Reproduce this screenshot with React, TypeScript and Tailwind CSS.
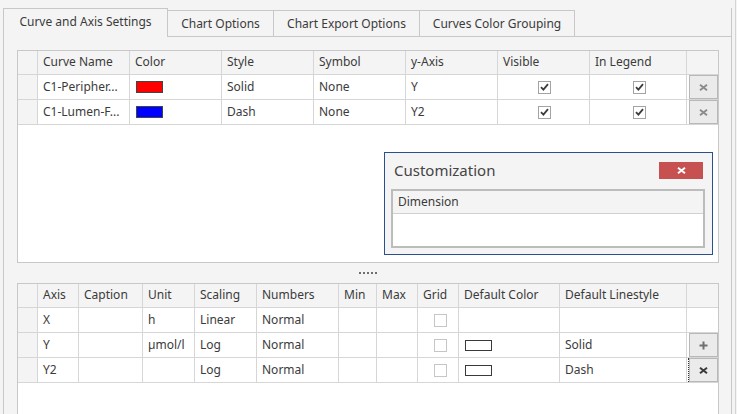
import React from 'react';

type Col = { w: string; label: string };

const curveCols: Col[] = [
  { w: 'w-[20px]', label: '' },
  { w: 'w-[92px]', label: 'Curve Name' },
  { w: 'w-[92px]', label: 'Color' },
  { w: 'w-[92px]', label: 'Style' },
  { w: 'w-[92px]', label: 'Symbol' },
  { w: 'w-[92px]', label: 'y-Axis' },
  { w: 'w-[92px]', label: 'Visible' },
  { w: 'w-[97px]', label: 'In Legend' },
];

const axisCols: Col[] = [
  { w: 'w-[20px]', label: '' },
  { w: 'w-[41px]', label: 'Axis' },
  { w: 'w-[64px]', label: 'Caption' },
  { w: 'w-[52px]', label: 'Unit' },
  { w: 'w-[62px]', label: 'Scaling' },
  { w: 'w-[82px]', label: 'Numbers' },
  { w: 'w-[38px]', label: 'Min' },
  { w: 'w-[41px]', label: 'Max' },
  { w: 'w-[41px]', label: 'Grid' },
  { w: 'w-[101px]', label: 'Default Color' },
  { w: 'w-[127px]', label: 'Default Linestyle' },
];

const curves = [
  { name: 'C1-Peripher...', color: 'bg-[#ff0000]', style: 'Solid', symbol: 'None', axis: 'Y' },
  { name: 'C1-Lumen-F...', color: 'bg-[#0000ff]', style: 'Dash', symbol: 'None', axis: 'Y2' },
];

const axes = [
  { axis: 'X', unit: 'h', scaling: 'Linear', numbers: 'Normal', swatch: false, line: '', btn: 'none' },
  { axis: 'Y', unit: 'µmol/l', scaling: 'Log', numbers: 'Normal', swatch: true, line: 'Solid', btn: 'plus' },
  { axis: 'Y2', unit: '', scaling: 'Log', numbers: 'Normal', swatch: true, line: 'Dash', btn: 'cross' },
];

const Check = ({ checked }: { checked: boolean }) => (
  <div
    className={
      checked
        ? 'w-[13px] h-[13px] border border-[#a3a3a3] bg-white flex items-center justify-center'
        : 'w-[13px] h-[13px] border border-[#c6c6c6] bg-white'
    }
  >
    {checked && (
      <svg width="9" height="8" viewBox="0 0 9 8">
        <path d="M1 4.2 L3.4 6.6 L8 1.2" stroke="#3c3c3c" strokeWidth="1.8" fill="none" />
      </svg>
    )}
  </div>
);

const Cross = ({ color }: { color: string }) => (
  <svg width="9" height="7" viewBox="0 0 9 7">
    <path d="M1 0.8 L8 6.2 M8 0.8 L1 6.2" stroke={color} strokeWidth="2" fill="none" />
  </svg>
);

const Plus = () => (
  <svg width="9" height="9" viewBox="0 0 9 9">
    <path d="M4.5 0.5 V8.5 M0.5 4.5 H8.5" stroke="#707070" strokeWidth="2" fill="none" />
  </svg>
);

const Cell = ({ w, children, className = '' }: { w: string; children?: React.ReactNode; className?: string }) => (
  <div className={`${w} shrink-0 h-full border-r border-[#d6d6d6] flex items-center pl-[5px] ${className}`}>{children}</div>
);

const HeaderRow = ({ cols }: { cols: Col[] }) => (
  <div className="flex h-[24px] border-b border-[#d6d6d6] bg-[#f4f4f4]">
    {cols.map((c, i) => (
      <Cell key={i} w={c.w} className="pb-[2px]">
        {c.label}
      </Cell>
    ))}
    <div className="w-[31px]" />
  </div>
);

export default function App() {
  return (
    <div className="w-[737px] h-[414px] overflow-hidden bg-[#f4f4f4] flex font-['Noto_Sans',sans-serif] text-[12px] text-[#3b3b3b]">
      <div className="w-[729px] ml-[3px] pt-[8px] flex flex-col">
        {/* tabs */}
        <div className="flex items-end h-[29px] shrink-0">
          <div className="h-[29px] w-[165px] border-l border-t border-r border-[#c8c8c8] flex items-center justify-center pb-[2px]">
            Curve and Axis Settings
          </div>
          <div className="h-[27px] w-[106px] border-t border-r border-b border-[#c8c8c8] flex items-center justify-center">
            Chart Options
          </div>
          <div className="h-[27px] w-[146px] border-t border-r border-b border-[#c8c8c8] flex items-center justify-center">
            Chart Export Options
          </div>
          <div className="h-[27px] w-[155px] border-t border-r border-b border-[#c8c8c8] flex items-center justify-center">
            Curves Color Grouping
          </div>
          <div className="flex-1 h-full border-b border-r border-[#c8c8c8]" />
        </div>

        {/* panel */}
        <div className="flex-1 border-l border-r border-[#c8c8c8] pl-[13px] pr-[12px] pt-[13px] flex flex-col">
          {/* curves grid */}
          <div className="relative h-[213px] shrink-0 border border-[#c8c8c8] bg-white">
            <HeaderRow cols={curveCols} />
            {curves.map((c) => (
              <div key={c.name} className="flex h-[25px] border-b border-[#d6d6d6]">
                <Cell w="w-[20px]" className="bg-[#f4f4f4]" />
                <Cell w="w-[92px]">{c.name}</Cell>
                <Cell w="w-[92px]" className="pl-[6px]">
                  <div className={`w-[27px] h-[12px] border border-[#444] ${c.color}`} />
                </Cell>
                <Cell w="w-[92px]">{c.style}</Cell>
                <Cell w="w-[92px]">{c.symbol}</Cell>
                <Cell w="w-[92px]">{c.axis}</Cell>
                <Cell w="w-[92px]" className="justify-center pl-0 pr-[3px]">
                  <Check checked />
                </Cell>
                <Cell w="w-[97px]" className="justify-center pl-0 pr-[3px]">
                  <Check checked />
                </Cell>
                <div className="w-[31px] h-full pl-[2px]">
                  <div className="h-full border border-[#b8b8b8] bg-[#ebebeb] flex items-center justify-center">
                    <Cross color="#8c8c8c" />
                  </div>
                </div>
              </div>
            ))}

            {/* customization popup */}
            <div className="absolute left-[366px] top-[101px] w-[329px] h-[103px] border border-[#2b4f8f] bg-[#f4f4f4] flex flex-col">
              <div className="mt-[9px] h-[17px] flex items-center justify-between pl-[9px] pr-[9px]">
                <span className="text-[15px] text-[#444]">Customization</span>
                <div className="w-[44px] h-[17px] bg-[#c75050] flex items-center justify-center">
                  <Cross color="#ffffff" />
                </div>
              </div>
              <div className="mt-[10px] ml-[6px] w-[314px] h-[59px] border-2 border-[#bcbcbc] bg-white">
                <div className="h-[23px] border-b border-[#d0d0d0] bg-[#f4f4f4] flex items-center pl-[5px]">Dimension</div>
              </div>
            </div>
          </div>

          {/* splitter */}
          <div className="h-[20px] shrink-0 flex items-center justify-center gap-[2px]">
            <div className="w-[2px] h-[2px] bg-[#6f6f6f]" />
            <div className="w-[2px] h-[2px] bg-[#6f6f6f]" />
            <div className="w-[2px] h-[2px] bg-[#6f6f6f]" />
            <div className="w-[2px] h-[2px] bg-[#6f6f6f]" />
            <div className="w-[2px] h-[2px] bg-[#6f6f6f]" />
          </div>

          {/* axes grid */}
          <div className="h-[220px] shrink-0 border border-[#c8c8c8] bg-white">
            <HeaderRow cols={axisCols} />
            {axes.map((a) => (
              <div key={a.axis} className="flex h-[25px] border-b border-[#d6d6d6]">
                <Cell w="w-[20px]" className="bg-[#f4f4f4]" />
                <Cell w="w-[41px]">{a.axis}</Cell>
                <Cell w="w-[64px]" />
                <Cell w="w-[52px]">{a.unit}</Cell>
                <Cell w="w-[62px]">{a.scaling}</Cell>
                <Cell w="w-[82px]">{a.numbers}</Cell>
                <Cell w="w-[38px]" />
                <Cell w="w-[41px]" />
                <Cell w="w-[41px]" className="justify-center pl-0">
                  <Check checked={false} />
                </Cell>
                <Cell w="w-[101px]" className="pl-[6px]">
                  {a.swatch && <div className="w-[27px] h-[11px] border border-[#3a3a3a] bg-white" />}
                </Cell>
                <Cell w="w-[127px]">{a.line}</Cell>
                <div className="w-[31px] h-full pl-[1px]">
                  {a.btn === 'plus' && (
                    <div className="h-full ml-px border border-[#b8b8b8] bg-[#ebebeb] flex items-center justify-center">
                      <Plus />
                    </div>
                  )}
                  {a.btn === 'cross' && (
                    <div className="h-full flex">
                      <div className="w-px h-full border-l border-[#333] [border-left-style:dotted]" />
                      <div className="flex-1 h-full border border-[#b8b8b8] bg-[#ebebeb] flex items-center justify-center">
                        <Cross color="#3a3a3a" />
                      </div>
                    </div>
                  )}
                </div>
              </div>
            ))}
          </div>
        </div>
      </div>
      <div className="ml-[3px] w-px h-full bg-[#d4d4d4]" />
    </div>
  );
}
